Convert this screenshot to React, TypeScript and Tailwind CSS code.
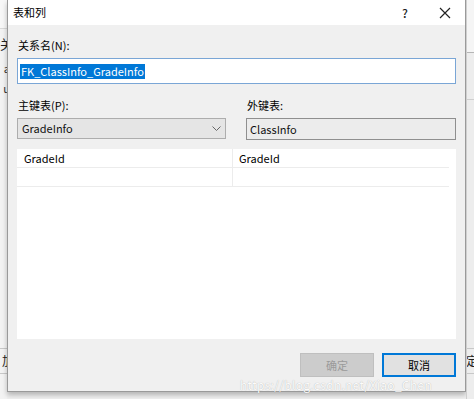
import React from "react";

const font = { fontFamily: '"Noto Sans CJK SC", "Noto Sans", sans-serif' };

export default function App() {
  return (
    <div className="flex h-[399px] w-[474px] overflow-hidden bg-[#f0f0f0] text-[11px] text-black" style={font}>
      {/* background window, left strip */}
      <div className="flex w-[7px] shrink-0 flex-col items-end overflow-hidden bg-[#f3f3f3] text-[11px] leading-none">
        <div className="h-[28px] w-full bg-[#f7f7f7]" />
        <div className="flex h-[30px] w-full items-center justify-end border-t border-[#d9d9d9]">
          <span className="-mr-[6px] text-[13px] text-[#222]">关</span>
        </div>
        <div className="flex h-[20px] w-full items-center justify-end">
          <span className="-mr-[3px] text-[#333]">a</span>
        </div>
        <div className="flex h-[20px] w-full items-center justify-end">
          <span className="-mr-[3px] text-[#333]">u</span>
        </div>
        <div className="flex-1" />
        <div className="flex h-[26px] w-full items-center justify-end border-y border-[#c8c8c8]">
          <span className="-mr-[7px] text-[12px] text-[#222]">加</span>
        </div>
        <div className="h-[25px] w-full" />
      </div>

      {/* dialog */}
      <div className="flex h-[392px] w-[459px] shrink-0 flex-col border-x border-b border-[#9a9a9a] bg-[#f0f0f0] shadow-[0_3px_5px_rgba(0,0,0,0.25)]">
        {/* title bar */}
        <div className="flex h-[28px] items-center bg-white pl-[5px]">
          <span className="text-[11px] text-black">表和列</span>
          <div className="flex-1" />
          <span className="mr-[31px] text-[12px] font-medium text-[#222]">?</span>
          <svg width="12" height="12" viewBox="0 0 12 12" className="mr-[14px]">
            <path d="M1 1 L11 11 M11 1 L1 11" stroke="#222" strokeWidth="1.2" fill="none" />
          </svg>
        </div>

        {/* body */}
        <div className="flex flex-1 flex-col px-[9px]">
          <div className="mt-[12px] h-[16px] pl-[1px] leading-[16px]">关系名(N):</div>
          <div className="mt-[5px] flex h-[26px] items-center border border-[#7aa6d6] bg-white px-[2px]">
            <span className="bg-[#0078d7] px-[1px] text-[11px] leading-[15px] text-white">FK_ClassInfo_GradeInfo</span>
          </div>

          <div className="mt-[13px] flex gap-[20px]">
            <div className="flex w-[209px] flex-col">
              <div className="h-[16px] pl-[1px] leading-[16px]">主键表(P):</div>
              <div className="mt-[5px] flex h-[21px] items-center justify-between border border-[#adadad] bg-[#e5e5e5] pl-[4px] pr-[4px]">
                <span className="text-[11px] text-[#111]">GradeInfo</span>
                <svg width="9" height="6" viewBox="0 0 9 6">
                  <path d="M0.5 0.5 L4.5 4.5 L8.5 0.5" stroke="#666" strokeWidth="1" fill="none" />
                </svg>
              </div>
            </div>
            <div className="flex flex-1 flex-col">
              <div className="h-[16px] pl-[1px] leading-[16px]">外键表:</div>
              <div className="mt-[5px] flex h-[22px] items-center border border-[#8f8f8f] bg-[#ececec] px-[3px]">
                <span className="text-[11px] text-[#111]">ClassInfo</span>
              </div>
            </div>
          </div>

          {/* grid */}
          <div className="mt-[9px] flex h-[190px] flex-col bg-white pr-[7px]">
            <div className="grid h-[19px] grid-cols-[216px_1fr] border-b border-[#ececec]">
              <div className="flex items-center border-r border-[#ececec] pl-[7px]">GradeId</div>
              <div className="flex items-center pl-[6px]">GradeId</div>
            </div>
            <div className="grid h-[19px] grid-cols-[216px_1fr] border-b border-[#ececec]">
              <div className="border-r border-[#ececec]" />
              <div />
            </div>
          </div>

          {/* buttons */}
          <div className="mt-[14px] flex justify-end gap-[8px]">
            <div className="flex h-[24px] w-[74px] items-center justify-center border border-[#bfbfbf] bg-[#cccccc] text-[#9a9a9a]">
              确定
            </div>
            <div className="flex h-[24px] w-[74px] items-center justify-center border-2 border-[#0078d7] bg-[#e1e1e1] text-black">
              取消
            </div>
          </div>
          <div className="mt-[1px] pl-[223px] text-[12px] leading-[13px] tracking-[0.3px] text-[#fbfbfb] [text-shadow:0_0_1px_rgba(0,0,0,0.3)]">
            https://blog.csdn.net/Xiao_Chen
          </div>
        </div>
      </div>

      {/* background window, right strip */}
      <div className="flex w-[8px] shrink-0 flex-col overflow-hidden border-l border-[#cfcfcf] bg-[#ededed]">
        <div className="h-[52px] w-full bg-[#f5f5f5]" />
        <div className="h-[1px] w-full bg-[#b5b5b5]" />
        <div className="h-[46px] w-full" />
        <div className="h-[1px] w-full bg-[#cfcfcf]" />
        <div className="flex-1" />
        <div className="flex h-[26px] w-full items-center border-y border-[#c8c8c8]">
          <span className="-ml-[1px] text-[12px] leading-none text-[#222]">定</span>
        </div>
        <div className="h-[25px] w-full" />
      </div>
    </div>
  );
}
